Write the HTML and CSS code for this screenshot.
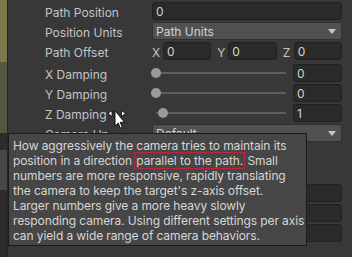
FILE: index.html
```html
<!DOCTYPE html>
<html lang="en">
<head>
    <meta charset="UTF-8">
    <title>Inspector</title>
    <link rel="stylesheet" href="styles.css">
</head>
<body>
    <div class="app">
        <div class="strip">
            <div class="strip-a"></div>
            <div class="strip-b"></div>
            <div class="strip-c"></div>
            <div class="strip-d"></div>
            <div class="strip-e"></div>
        </div>
        <div class="inspector">
            <div class="row">
                <span class="label">Path Position</span>
                <div class="field">0</div>
            </div>
            <div class="row">
                <span class="label">Position Units</span>
                <div class="dropdown">Path Units<span class="arrow"></span></div>
            </div>
            <div class="row">
                <span class="label">Path Offset</span>
                <div class="vector">
                    <div class="axis"><span>X</span><div class="field">0</div></div>
                    <div class="axis"><span>Y</span><div class="field">0</div></div>
                    <div class="axis"><span>Z</span><div class="field">0</div></div>
                </div>
            </div>
            <div class="row slider-first">
                <span class="label">X Damping</span>
                <div class="slider"><div class="track"><span class="knob" style="left: 0%"></span></div></div>
                <div class="field num">0</div>
            </div>
            <div class="row">
                <span class="label">Y Damping</span>
                <div class="slider"><div class="track"><span class="knob" style="left: 0%"></span></div></div>
                <div class="field num">0</div>
            </div>
            <div class="row">
                <span class="label">Z Damping</span>
                <div class="slider"><div class="track"><span class="knob" style="left: 5%"></span></div></div>
                <div class="field num">1</div>
            </div>
            <div class="row">
                <span class="label">Camera Up</span>
                <div class="dropdown">Default<span class="arrow"></span></div>
            </div>
            <!-- rows below are covered by the tooltip, only their right edge shows -->
            <div class="row"></div>
            <div class="row"></div>
            <div class="row"><span class="label"></span><div class="field"></div></div>
            <div class="row"><span class="label"></span><div class="field"></div></div>
            <div class="row"><span class="label"></span><div class="field"></div></div>

            <svg class="cursor" width="22" height="22" viewBox="0 0 22 22">
                <path d="M1 4.5 L5 1.5 L5 7.5 Z" fill="#fff" stroke="#000" stroke-width="0.8"/>
                <path d="M18.5 4.5 L14.5 1.5 L14.5 7.5 Z" fill="#fff" stroke="#000" stroke-width="0.8"/>
                <path d="M8 1.5 L8 17 L11.2 14 L13.4 19.2 L15.4 18.3 L13.2 13.3 L17.5 13.3 Z" fill="#fff" stroke="#000" stroke-width="0.9" stroke-linejoin="round"/>
            </svg>

            <div class="tooltip">
                How aggressively the camera tries to maintain its<br>
                position in a direction <span class="mark">parallel to the path.</span> Small<br>
                numbers are more responsive, rapidly translating<br>
                the camera to keep the target's z-axis offset.<br>
                Larger numbers give a more heavy slowly<br>
                responding camera. Using different settings per axis<br>
                can yield a wide range of camera behaviors.
            </div>
        </div>
    </div>
</body>
</html>
```

FILE: styles.css
```css
* {
    margin: 0;
    padding: 0;
    box-sizing: border-box;
}

body {
    width: 352px;
    height: 257px;
    overflow: hidden;
    background: #383838;
    font-family: Inter, "Noto Sans", sans-serif;
    font-size: 12px;
    color: #c4c4c4;
}

.app {
    display: flex;
    height: 257px;
}

.strip {
    width: 8px;
    display: flex;
    flex-direction: column;
    border-right: 1px solid #252525;
}

.strip-a { height: 62px; background: #7b7a4b; }
.strip-b { height: 71px; background: #56553f; }
.strip-c { height: 17px; background: #2c2c2c; }
.strip-d { height: 40px; background: #474747; }
.strip-e { flex: 1; background: #2c2c2c; }

.inspector {
    flex: 1;
    position: relative;
    padding: 1px 10px 0 37px;
}

.row {
    display: flex;
    align-items: center;
    height: 20px;
}

.slider-first {
    margin-top: 2px;
}

.label {
    width: 107px;
    flex-shrink: 0;
    white-space: nowrap;
    padding-top: 2px;
}

.field {
    flex: 1;
    height: 18px;
    background: #2a2a2a;
    border: 1px solid #212121;
    border-radius: 3px;
    color: #d2d2d2;
    padding: 1px 0 0 3px;
    line-height: 15px;
}

.field.num {
    flex: 0 0 49px;
}

.dropdown {
    flex: 1;
    height: 18px;
    background: #515151;
    border: 1px solid #303030;
    border-radius: 3px;
    color: #d2d2d2;
    padding: 1px 0 0 3px;
    line-height: 15px;
    position: relative;
}

.arrow {
    position: absolute;
    right: 5px;
    top: 6px;
    border-left: 4px solid transparent;
    border-right: 4px solid transparent;
    border-top: 5px solid #c8c8c8;
}

.vector {
    flex: 1;
    display: flex;
    gap: 6px;
}

.axis {
    flex: 1;
    display: flex;
    align-items: center;
}

.axis span {
    width: 11px;
    padding-top: 2px;
}

.slider {
    flex: 1;
    margin-right: 5px;
    padding: 0 2px 0 4px;
}

.track {
    position: relative;
    height: 2px;
    background: #5e5e5e;
}

.knob {
    position: absolute;
    top: -4px;
    width: 10px;
    height: 10px;
    margin-left: -5px;
    border-radius: 50%;
    background: #9a9a9a;
}

.cursor {
    position: absolute;
    left: 99px;
    top: 109px;
}

.tooltip {
    position: absolute;
    left: 0;
    top: 133px;
    width: 299px;
    height: 113px;
    background: #464646;
    border: 1px solid #1b1b1b;
    color: #d6d6d6;
    padding: 4px 0 0 4px;
    line-height: 15px;
    white-space: nowrap;
    letter-spacing: -0.1px;
}

.mark {
    border: 1px solid #b8283e;
    padding: 0 1px;
    margin: 0 -1px;
}
```
